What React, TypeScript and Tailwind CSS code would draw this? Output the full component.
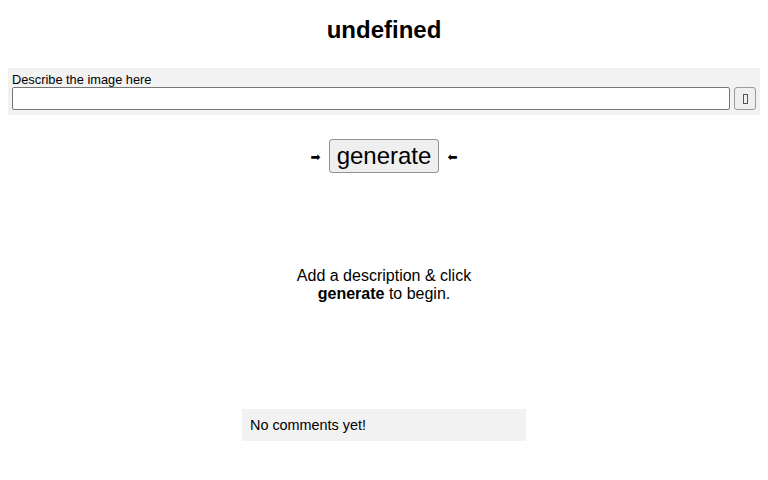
export default function App() {
  return (
    <div className="min-h-[480px] bg-white pt-4 text-black [font-family:'Liberation_Sans',Arial,sans-serif]">
      <h1 className="text-center text-2xl font-bold leading-7">undefined</h1>

      {/* Prompt panel */}
      <div className="mx-2 mt-6 bg-[#f2f2f2] px-1 pb-[5px] pt-1">
        <label className="block text-[12.8px] leading-[15px]">Describe the image here</label>
        <div className="flex items-center gap-1">
          <input
            type="text"
            className="h-[23px] flex-1 rounded-[2px] border border-[#767676] bg-white px-1 text-[13px] outline-none"
          />
          <button className="flex h-[23px] w-[22px] items-center justify-center rounded-[3px] border border-[#9a9a9a] bg-[#efefef]">
            <span className="block h-[10px] w-[5px] border border-[#555]" />
          </button>
        </div>
      </div>

      {/* Generate row */}
      <div className="mt-6 flex items-center justify-center gap-2">
        <span className="mt-0.5 text-[12px] leading-none [font-family:'DejaVu_Sans',sans-serif]">➡</span>
        <button className="rounded-[3px] border border-[#8f8f8f] bg-[#efefef] px-[7px] py-0.5 text-2xl leading-7">
          generate
        </button>
        <span className="mt-0.5 text-[12px] leading-none [font-family:'DejaVu_Sans',sans-serif]">⬅</span>
      </div>

      <p className="mt-[94px] text-center text-base leading-[18px]">
        Add a description &amp; click
        <br />
        <b>generate</b> to begin.
      </p>

      <div className="mx-auto mt-[106px] w-[284px] bg-[#f2f2f2] px-2 py-[7px] text-[14.4px] leading-[18px]">
        No comments yet!
      </div>
    </div>
  )
}
